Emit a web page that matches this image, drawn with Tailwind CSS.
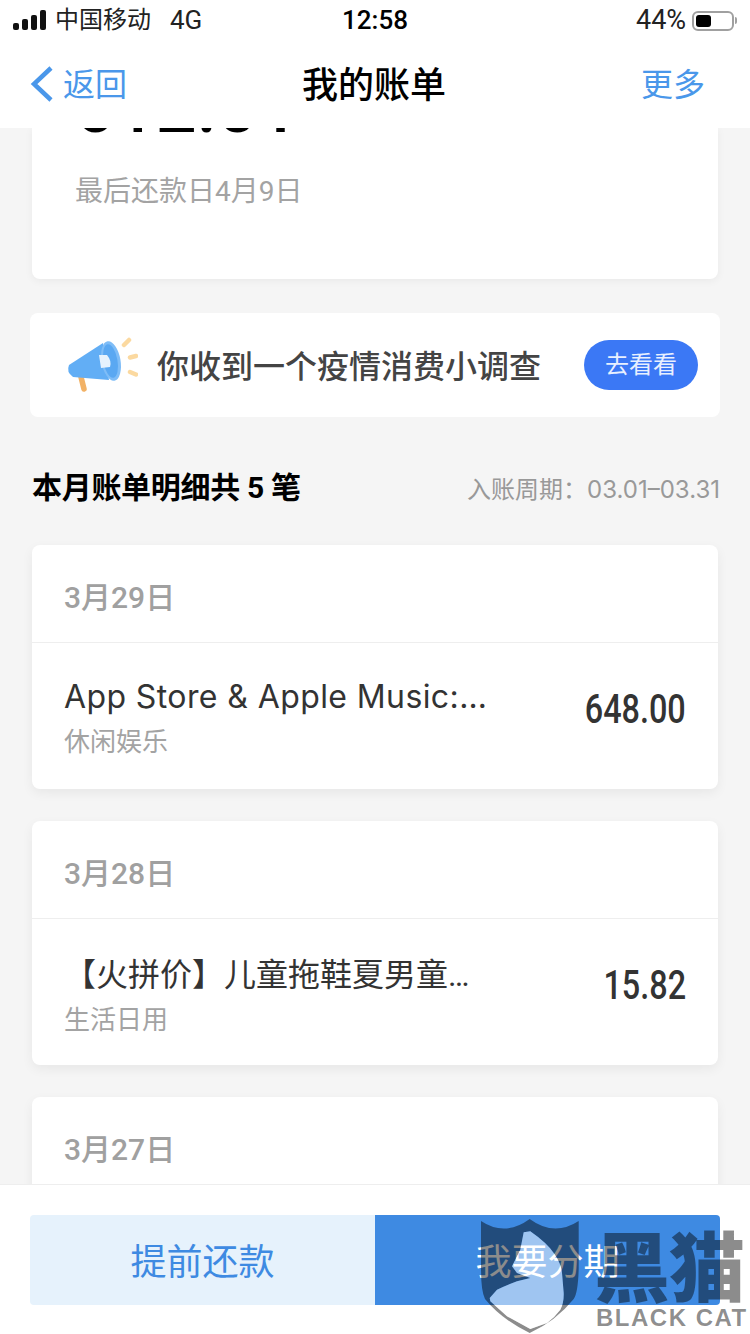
<!DOCTYPE html>
<html lang="zh"><head><meta charset="utf-8"><script src="https://cdn.jsdelivr.net/npm/@tailwindcss/browser@4"></script></head>
<body class="m-0">
<div class="relative w-[750px] h-[1334px] overflow-hidden bg-[#f5f5f5] font-['Roboto','Noto_Sans_CJK_SC',sans-serif]">
  <!-- scrolling content -->
  <div class="flex flex-col h-full">
    <div class="h-[128px] shrink-0"></div>
    <div class="shrink-0 mx-[32px] h-[151px] rounded-b-[8px] bg-white shadow-[0_2px_8px_rgba(0,0,0,0.05)] pl-[43px] pt-[46px] relative">
      <div class="absolute left-[42px] top-[-56px] text-[72px] leading-[72px] font-medium text-black whitespace-nowrap">612.01</div>
      <div class="text-[28px] leading-[36px] text-[#a3a3a3]">最后还款日4月9日</div>
    </div>
    <div class="shrink-0 mt-[34px] mx-[30px] h-[104px] rounded-[8px] bg-white flex items-center pl-[36px] pr-[22px]">
      <svg class="w-[72px] h-[76px] shrink-0 mt-[4px]" viewBox="0 0 72 76">
        <path d="M15 48 L18 60" stroke="#f2b266" stroke-width="5.5" stroke-linecap="round"/>
        <path d="M3 36 L37 14 L43 51 L7 48 Q0 43 3 36Z" fill="#62aef5"/>
        <ellipse cx="45" cy="32" rx="9.5" ry="20" fill="#7fbdf7" transform="rotate(-10 45 32)"/>
        <ellipse cx="44.5" cy="32" rx="7" ry="17" fill="#5aa8f2" transform="rotate(-10 44.5 32)"/>
        <path d="M33 26 L41 26 Q46 32 44 38 L35 39Z" fill="#e6f2fd"/>
        <path d="M58 16 L63 11 M64 28.5 L70 27 M64 43 L70 45.5" stroke="#fbd9a0" stroke-width="4.5" stroke-linecap="round"/>
      </svg>
      <div class="ml-[19px] mt-[4px] text-[32px] leading-[40px] text-[#444444] font-medium whitespace-nowrap">你收到一个疫情消费小调查</div>
      <div class="ml-auto w-[114px] h-[50px] rounded-full bg-[#3b78f5] text-[#e8f0ff] text-[24px] flex items-center justify-center">去看看</div>
    </div>
    <div class="shrink-0 mt-[50px] ml-[32px] flex items-center justify-between h-[40px]">
      <div class="text-[30px] font-bold text-black whitespace-nowrap tracking-[-0.3px]">本月账单明细共 5 笔</div>
      <div class="text-[24px] text-[#999999] whitespace-nowrap mr-[30px] mt-[6px] font-['Inter','Noto_Sans_CJK_SC',sans-serif]">入账周期：03.01–03.31</div>
    </div>
    <div class="shrink-0 mt-[38px] mx-[32px] flex flex-col gap-[32px]">
      <div class="h-[244px] shrink-0 rounded-[8px] bg-white shadow-[0_4px_12px_rgba(0,0,0,0.06)] flex flex-col">
        <div class="h-[98px] border-b border-[#eeeeee] pl-[32px] pt-[8px] flex items-center text-[30px] font-medium text-[#a0a0a0]">3月29日</div>
        <div class="flex-1 flex items-center justify-between pl-[32px] pr-[32px]">
          <div class="flex flex-col mt-[4px]">
            <div class="text-[32px] leading-[42px] tracking-[0.4px] text-[#333333] whitespace-nowrap font-['Inter','Noto_Sans_CJK_SC',sans-serif]">App Store &amp; Apple Music:…</div>
            <div class="text-[26px] leading-[36px] text-[#a3a3a3] mt-[6px]">休闲娱乐</div>
          </div>
          <div class="text-[40px] font-medium text-[#333333] scale-x-[0.81] origin-right mb-[12px]">648.00</div>
        </div>
      </div>
      <div class="h-[244px] shrink-0 rounded-[8px] bg-white shadow-[0_4px_12px_rgba(0,0,0,0.06)] flex flex-col">
        <div class="h-[98px] border-b border-[#eeeeee] pl-[32px] pt-[8px] flex items-center text-[30px] font-medium text-[#a0a0a0]">3月28日</div>
        <div class="flex-1 flex items-center justify-between pl-[32px] pr-[32px]">
          <div class="flex flex-col mt-[7px]">
            <div class="text-[32px] leading-[42px] text-[#333333] whitespace-nowrap">【火拼价】儿童拖鞋夏男童…</div>
            <div class="text-[26px] leading-[36px] text-[#a3a3a3] mt-[6px]">生活日用</div>
          </div>
          <div class="text-[40px] font-medium text-[#333333] scale-x-[0.81] origin-right mb-[12px]">15.82</div>
        </div>
      </div>
      <div class="h-[244px] shrink-0 rounded-[8px] bg-white shadow-[0_4px_12px_rgba(0,0,0,0.06)] flex flex-col">
        <div class="h-[98px] border-b border-[#eeeeee] pl-[32px] pt-[8px] flex items-center text-[30px] font-medium text-[#a0a0a0]">3月27日</div>
      </div>
    </div>
  </div>

  <!-- top bar -->
  <div class="absolute top-0 left-0 w-full h-[128px] bg-white flex flex-col">
    <div class="h-[40px] shrink-0 flex items-center relative text-[24px] text-[#222222] px-[13px]">
      <svg class="w-[34px] h-[20px]" viewBox="0 0 34 20"><rect x="0" y="13" width="6" height="7" rx="2" fill="#111"/><rect x="9" y="9" width="6" height="11" rx="2" fill="#111"/><rect x="18" y="5" width="6" height="15" rx="2" fill="#111"/><rect x="27" y="0" width="6" height="20" rx="2" fill="#111"/></svg>
      <span class="ml-[8px]">中国移动</span><span class="ml-[19px] text-[26px]">4G</span>
      <span class="absolute left-[342px] text-[26px] font-medium text-black">12:58</span>
      <span class="absolute left-[636px] text-[27px]">44%</span>
      <span class="absolute left-[692px] top-[11px] w-[42px] h-[20px] rounded-[6px] border-2 border-[#a0a0a0] p-[2px]"><span class="block w-[15px] h-full rounded-[3px] bg-black"></span></span>
      <span class="absolute left-[735px] top-[17px] w-[2px] h-[7px] rounded-r-[2px] bg-[#a0a0a0]"></span>
    </div>
    <div class="flex-1 flex items-center justify-between pl-[30px] pr-[45px] relative">
      <div class="flex items-center text-[#4a97ea] text-[32px]">
        <svg class="w-[24px] h-[36px]" viewBox="0 0 24 36"><path d="M21 2 L4 18 L21 34" fill="none" stroke="#4a97ea" stroke-width="4.5"/></svg>
        <span class="ml-[9px] mt-[2px]">返回</span>
      </div>
      <div class="absolute left-[302px] mt-[4px] text-[36px] font-medium text-black whitespace-nowrap">我的账单</div>
      <div class="text-[#4a97ea] text-[32px] mt-[2px]">更多</div>
    </div>
  </div>

  <!-- bottom bar -->
  <div class="absolute bottom-0 left-0 w-full h-[150px] bg-white border-t border-[#eeeeee] pt-[30px] px-[30px]">
    <div class="flex h-[90px] rounded-[4px] overflow-hidden">
      <div class="w-[345px] bg-[#e6f2fc] text-[#3e8ae2] text-[36px] pt-[6px] flex items-center justify-center">提前还款</div>
      <div class="w-[345px] bg-[#3e8ae2] text-white text-[36px] pt-[6px] flex items-center justify-center">我要分期</div>
    </div>
  </div>

  <!-- watermark -->
  <div class="absolute left-[481px] top-[1219px] w-[269px] h-[115px]">
    <svg class="absolute left-0 top-0 w-[98px] h-[115px]" viewBox="0 0 98 115">
      <path fill-rule="evenodd" fill="#000" fill-opacity="0.45" d="M0 2 Q24 18 48.7 0 Q73 18 97.7 2 V50 Q97 74 92.7 80 Q75 102 48.7 114 Q20 100 4 80 Q0 72 0 50Z M42.7 13.3 L49.3 12.3 Q66 24 72.7 34 Q80 44 81 54 L82.7 74 Q83 84 79.3 90.7 Q74 98 66 104 L49.3 110 L26 97.3 L9.3 82.3 L8.7 79 L16 70.7 Q26 66 36 62.3 L49.3 59 L36 54 L31 47.3 L39.3 30.7Z"/>
      <path fill="#fff" fill-opacity="0.5" d="M42.7 13.3 L49.3 12.3 Q66 24 72.7 34 Q80 44 81 54 L82.7 74 Q83 84 79.3 90.7 Q74 98 66 104 L49.3 110 L26 97.3 L9.3 82.3 L8.7 79 L16 70.7 Q26 66 36 62.3 L49.3 59 L36 54 L31 47.3 L39.3 30.7Z"/>
    </svg>
    <div class="absolute left-[113px] top-[6px] text-[76px] leading-[76px] font-black text-black/45 whitespace-nowrap tracking-[-1px] font-['Noto_Sans_CJK_SC',sans-serif]">黑猫</div>
    <div class="absolute left-[115px] top-[86px] text-[24px] leading-[26px] font-bold text-black/45 whitespace-nowrap font-['Liberation_Sans',sans-serif] tracking-[1.5px]">BLACK CAT</div>
  </div>
</div>
</body></html>
